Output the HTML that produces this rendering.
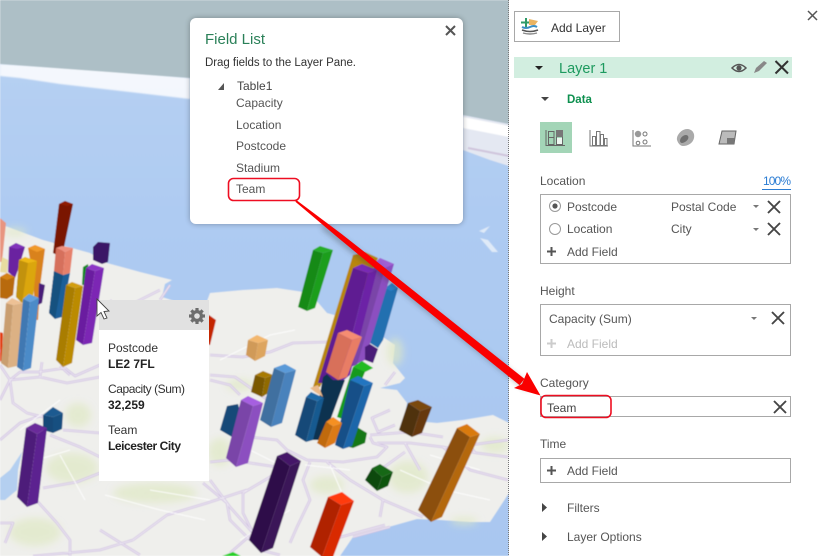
<!DOCTYPE html>
<html><head><meta charset="utf-8"><style>
html,body{margin:0;padding:0;background:#fff}
svg{display:block;font-family:"Liberation Sans",sans-serif}
text{font-size:12px;fill:#444}
.b{font-weight:bold;fill:#222}
</style></head><body>
<svg width="825" height="556" viewBox="0 0 825 556" xmlns="http://www.w3.org/2000/svg">
<defs>
<filter id="s" x="-20%" y="-20%" width="140%" height="140%"><feGaussianBlur stdDeviation="3"/></filter>
<filter id="bl"><feGaussianBlur stdDeviation="0.45"/></filter>
<filter id="bl2"><feGaussianBlur stdDeviation="3"/></filter>
<filter id="bl3" x="-20%" y="-20%" width="140%" height="140%"><feGaussianBlur stdDeviation="4"/></filter>
<filter id="tx"><feGaussianBlur stdDeviation="0.28"/></filter>
<linearGradient id="sea" x1="0" y1="0" x2="0" y2="1"><stop offset="0" stop-color="#b9d2f2"/><stop offset=".4" stop-color="#aecbf2"/><stop offset="1" stop-color="#a9c7f0"/></linearGradient>
<path id="r" d="M210,355 243,357 270,352 293,343 327,342 M210,380 230,385 240,395 M210,375 235,377 265,398 285,405 M250,437 277,440 287,450 307,460 343,462 377,457 387,447 373,443 370,437 M377,443 410,443 443,447 477,453 508,457 M370,435 410,432 443,437 M327,462 350,480 383,500 423,517 M380,517 383,500 M390,527 353,537 M310,462 303,480 310,500 297,527 290,543 M210,462 230,460 277,467 M210,480 230,507 253,533 M243,493 270,477 277,470 M243,493 243,513 253,533 230,553 M10,380 13,403 27,413 43,417 M10,380 40,377 67,383 100,377 M0,440 20,423 43,415 M50,435 80,447 100,457 M63,430 100,433 M43,488 77,482 100,473 M38,502 57,523 70,540 70,556 M0,523 13,523 5,543 M133,540 167,515 207,503 247,490 M203,483 227,503 230,520 250,540 M33,556 100,550 133,540 M0,400 10,380 M0,365 10,380 20,372 38,372 65,368 M40,377 42,362 M65,368 75,376 100,365 M0,350 8,362 M60,366 70,375 M280,555 260,550 M385,385 395,372 M390,410 372,418 378,432 395,425 M405,452 380,470 M443,447 470,470 508,480 M475,453 470,445 508,440 M140,555 100,530 M405,443 420,470 M330,540 385,525 M160,300 170,285 M130,305 160,290 M110,300 125,320"/>
<path id="w" d="M20,465 70,450 M60,455 85,500 M105,495 160,510 205,520 M150,490 210,500 M220,360 270,335 295,330 M330,465 345,500 M400,470 445,490 490,500 M430,455 480,470 M250,450 280,465 M305,465 350,470 M20,430 60,400 M240,540 290,510"/>
</defs>
<g filter="url(#bl)">
<rect width="509" height="556" fill="url(#sea)"/>
<!-- sky -->
<polygon points="0,64 100,70 190,78 190,99 130,92 60,84 20,78 0,76" fill="#fff" opacity=".85" filter="url(#bl)"/>
<polygon points="463,115 509,124 509,166 490,160 463,150" fill="#e4e8f2"/>
<polygon points="463,117 509,126 509,137 463,128" fill="#fff"/>
<path d="M468,148 509,156" stroke="#cfc4dc" stroke-width="2" fill="none"/>
<polygon points="0,0 509,0 509,124 463,115 300,95 190,78 0,64" fill="#adbfc6"/>
<polygon points="479,231 490,226 484,233" fill="#dfeaf8"/>
<polygon points="480,238 488,240 498,252 492,252" fill="#dfeaf8"/>
<!-- land -->
<polygon points="0,224 43,240 90,253 107,263 140,272 172,280 165,284 162,297 190,306 203,312 210,293 243,290 277,288 310,293 327,313 360,322 380,335 395,345 393,363 405,378 400,383 380,388 397,390 407,403 404,420 437,423 463,420 493,415 509,423 509,493 490,522 470,522 440,520 417,519 385,528 353,537 340,556 0,556" fill="#efefec"/>
<!-- green tints -->
<g fill="#dfe8c4" opacity=".7" filter="url(#bl3)">
<ellipse cx="78" cy="415" rx="13" ry="12"/><ellipse cx="72" cy="468" rx="26" ry="15"/><ellipse cx="155" cy="493" rx="42" ry="10"/>
<ellipse cx="35" cy="532" rx="26" ry="14"/><ellipse cx="220" cy="452" rx="12" ry="14"/><ellipse cx="408" cy="477" rx="20" ry="16"/>
<ellipse cx="327" cy="485" rx="17" ry="9"/><ellipse cx="495" cy="445" rx="14" ry="8"/><ellipse cx="464" cy="521" rx="14" ry="4"/>
<ellipse cx="395" cy="352" rx="8" ry="14"/><ellipse cx="240" cy="385" rx="14" ry="6"/><ellipse cx="15" cy="232" rx="12" ry="4"/>
</g>
<polygon points="22,452 18,470 17,490 5,500 0,500 0,478 10,470" fill="#b4cff0"/>
<!-- roads -->
<use href="#r" fill="none" stroke="#d2c3e2" stroke-width="2.6" stroke-linejoin="round"/>
<use href="#r" fill="none" stroke="#f1eef4" stroke-width=".8" stroke-linejoin="round"/>
<use href="#w" fill="none" stroke="#fff" stroke-width="1" opacity=".85"/>

<!-- far-left cluster -->
<polygon points="0,218 6,223 2,262 0,262" fill="#e89580"/>
<polygon points="59,204 65,201 73,204 63,252 57,255 53,253" fill="#7a1400"/>
<polygon points="59,204 65,201 73,204 67,206" fill="#8f1c04"/>
<polygon points="93,247 98,242 110,243 108,262 102,264 93,260" fill="#3a1566"/>
<polygon points="83,267 88,264 90,285 82,285" fill="#118a1c"/>
<polygon points="9,247 16,243 25,247 18,270 15,278 8,272" fill="#6b24a0"/>
<polygon points="9,247 16,243 25,247 17,249" fill="#8130bb"/>
<polygon points="2,257 8,260 7,273 0,272" fill="#e8dca0"/>
<polygon points="28,248 35,245 45,249 40,287 38,320 36,320 32,270" fill="#d9821b"/>
<polygon points="28,248 35,245 45,249 37,252" fill="#f09a2c"/>
<polygon points="39,283 45,285 42,303 38,305" fill="#4a1a78"/>
<polygon points="19,260 25,257 37,261 33,297 22,303 16,297" fill="#dba60f"/>
<polygon points="19,260 28,263 22,303 16,297" fill="#c29207"/>
<polygon points="19,260 25,257 37,261 28,263" fill="#eeb818"/>
<polygon points="0,277 7,273 15,277 13,295 7,299 0,298" fill="#b86a08"/>
<polygon points="0,277 7,273 15,277 7,280" fill="#d48312"/>
<polygon points="54,271 63,275 70,273 62,317 55,319 49,313" fill="#1a5f99"/>
<polygon points="54,271 63,275 55,319 49,313" fill="#14517f"/>
<polygon points="56,248 65,252 63,275 54,271" fill="#d66f5b"/>
<polygon points="65,252 73,248 70,273 63,275" fill="#e6806a"/>
<polygon points="56,248 62,246 73,248 65,252" fill="#ee9180"/>
<polygon points="86,268 95,271 83,345 76,340" fill="#6a1fa0"/>
<polygon points="95,271 104,268 92,343 83,345" fill="#7b28b4"/>
<polygon points="86,268 92,264 104,268 95,271" fill="#8d36c6"/>
<polygon points="66,285 75,288 63,367 56,360" fill="#a97d00"/>
<polygon points="75,288 83,286 72,363 63,367" fill="#bb8b03"/>
<polygon points="66,285 72,282 83,286 75,288" fill="#d29e08"/>
<polygon points="0,332 3,333 2,360 0,362" fill="#e23b0c"/>
<polygon points="6,303 13,305 8,368 1,363" fill="#c99e70"/>
<polygon points="13,305 23,303 17,366 8,368" fill="#dcb184"/>
<polygon points="6,303 12,298 23,303 13,305" fill="#edc195"/>
<polygon points="23,299 30,302 23,371 17,367" fill="#3f78b2"/>
<polygon points="30,302 39,298 31,368 23,371" fill="#4b8bc8"/>
<polygon points="23,299 29,294 39,298 30,302" fill="#62a0de"/>
<!-- small dark blue -->
<polygon points="43,415 53,417 53,433 43,430" fill="#134a78"/>
<polygon points="53,417 63,413 62,429 53,433" fill="#164f80"/>
<polygon points="43,415 53,407 63,413 53,417" fill="#1a5a90"/>
<!-- left purple -->
<polygon points="26,428 37,434 27,507 17,497" fill="#4e1a7a"/>
<polygon points="37,434 47,428 38,503 27,507" fill="#5c2090"/>
<polygon points="26,428 35,423 47,428 37,434" fill="#6a2a9a"/>
<!-- red behind tooltip -->
<polygon points="205,315 209,315 216,320 210,345 205,345" fill="#c42600"/>
<!-- mid small -->
<polygon points="248,340 258,343 255,361 246,355" fill="#d09a58"/>
<polygon points="258,343 268,340 265,356 255,361" fill="#dda55f"/>
<polygon points="248,340 257,335 268,340 258,343" fill="#f2b76e"/>
<polygon points="255,375 265,378 262,397 251,392" fill="#7a5800"/>
<polygon points="265,378 273,375 270,392 262,397" fill="#906a00"/>
<polygon points="255,375 263,371 273,375 265,378" fill="#a87a00"/>
<polygon points="274,368 285,373 271,427 260,420" fill="#3f70a0"/>
<polygon points="285,373 296,370 282,423 271,427" fill="#4a82bc"/>
<polygon points="274,368 285,364 296,370 285,373" fill="#5a9ad8"/>
<polygon points="227,406 238,404 240,412 235,437 232,437 220,430" fill="#134a78"/>
<polygon points="241,400 253,406 236,467 226,458" fill="#7a45a8"/>
<polygon points="253,406 263,403 248,463 236,467" fill="#8c50c0"/>
<polygon points="241,400 248,396 263,403 253,406" fill="#a65fe0"/>
<!-- green tall -->
<polygon points="313,250 323,253 307,311 298,307" fill="#168a18"/>
<polygon points="323,253 333,250 315,308 307,311" fill="#1e9e1e"/>
<polygon points="313,250 320,246 333,250 323,253" fill="#26ad26"/>
<!-- big cluster -->
<polygon points="353,255 365,252 378,258 320,387 313,387" fill="#b8860b"/>
<polygon points="392,283 398,288 383,340 378,348 370,343 385,288" fill="#2070b0"/>
<polygon points="385,288 392,283 398,288 391,291" fill="#2a7fc4"/>
<polygon points="375,263 380,258 394,264 365,360 350,367" fill="#8c50c0"/>
<polygon points="375,263 385,268 357,365 350,367" fill="#7a45a8"/>
<polygon points="375,263 380,258 394,264 385,268" fill="#a060d4"/>
<polygon points="353,268 368,273 340,383 318,383" fill="#5e1e92"/>
<polygon points="368,273 377,270 350,375 340,383" fill="#6c22a6"/>
<polygon points="353,268 362,264 377,270 368,273" fill="#7a2cb8"/>
<polygon points="365,347 370,344 378,349 373,363 365,360" fill="#4a1a78"/>
<polygon points="353,367 362,361 373,368 365,372 345,420 337,417" fill="#179a1e"/>
<polygon points="353,367 362,361 373,368 365,372" fill="#24bb24"/>
<polygon points="338,333 352,340 338,380 326,372" fill="#d8705a"/>
<polygon points="352,340 362,337 347,377 338,380" fill="#e87d65"/>
<polygon points="338,333 347,330 362,337 352,340" fill="#f58d72"/>
<polygon points="357,427 367,433 365,443 353,448 345,446" fill="#147814"/>
<polygon points="323,377 327,374 333,380 345,380 323,440 312,440" fill="#0f3050"/>
<polygon points="350,380 364,386 343,449 335,445" fill="#154f88"/>
<polygon points="364,386 373,383 352,446 343,449" fill="#1c66aa"/>
<polygon points="350,380 358,376 373,383 364,386" fill="#2074c0"/>
<polygon points="310,388 318,385 323,397 315,392" fill="#eab98a"/>
<polygon points="306,397 317,401 306,442 295,435" fill="#134a78"/>
<polygon points="317,401 324,398 313,440 306,442" fill="#175a90"/>
<polygon points="306,397 311,392 324,398 317,401" fill="#1f6aa8"/>
<polygon points="326,422 333,426 325,448 317,443" fill="#c06a10"/>
<polygon points="333,426 342,423 335,443 325,448" fill="#dc7a12"/>
<polygon points="326,422 333,417 342,423 333,426" fill="#f59020"/>
<!-- brown right -->
<polygon points="408,403 420,411 412,437 399,430" fill="#50300a"/>
<polygon points="420,411 432,407 422,433 412,437" fill="#66380a"/>
<polygon points="408,403 418,400 432,407 420,411" fill="#7a4a10"/>
<!-- orange-brown big -->
<polygon points="457,428 470,437 431,522 418,510" fill="#8c4f08"/>
<polygon points="470,437 480,434 442,517 431,522" fill="#b4680c"/>
<polygon points="457,428 467,424 480,434 470,437" fill="#d97a10"/>
<!-- dark green -->
<polygon points="372,468 382,477 377,491 365,480" fill="#0c480c"/>
<polygon points="382,477 393,472 388,486 377,491" fill="#105410"/>
<polygon points="372,468 380,464 393,472 382,477" fill="#156815"/>
<!-- dark purple big -->
<polygon points="277,456 290,466 261,553 249,540" fill="#2f0f4a"/>
<polygon points="290,466 301,461 273,548 261,553" fill="#3a1259"/>
<polygon points="277,456 287,452 301,461 290,466" fill="#451668"/>
<!-- red -->
<polygon points="328,497 341,505 322,557 310,547" fill="#b02000"/>
<polygon points="341,505 354,501 333,557 322,557" fill="#d92a00"/>
<polygon points="328,497 342,492 354,501 341,505" fill="#ff3b0f"/>
<!-- green bottom -->
<polygon points="222,556 233,552 241,556" fill="#28d028"/>
</g>

<!-- dotted edge -->
<line x1="508.5" y1="0" x2="508.5" y2="556" stroke="#777" stroke-dasharray="1 1"/>

<rect x="190" y="18" width="273" height="206" rx="6" fill="#000" opacity=".3" filter="url(#s)"/>
<g filter="url(#tx)">
<!-- field list -->
<rect x="190" y="18" width="273" height="206" rx="6" fill="#fff"/>
<text x="205" y="44" style="font-size:15px;fill:#2a8058">Field List</text>
<path d="M446,26 455,35 M455,26 446,35" stroke="#555" stroke-width="2" fill="none"/>
<text x="205" y="66" textLength="151" style="font-size:11.5px;fill:#333">Drag fields to the Layer Pane.</text>
<polygon points="224,83 224,90 218,90" fill="#555"/>
<text x="237" y="90" style="fill:#444;font-size:12px">Table1</text>
<text x="236" y="107" style="fill:#555">Capacity</text>
<text x="236" y="129" style="fill:#555">Location</text>
<text x="236" y="150" style="fill:#555">Postcode</text>
<text x="236" y="172" style="fill:#555">Stadium</text>
<text x="236" y="193" style="fill:#555">Team</text>

<!-- tooltip -->
<rect x="99" y="300" width="110" height="181" fill="#fff"/>
<rect x="99" y="300" width="110" height="30" fill="#e1e1e1"/>
<g transform="translate(197,316)" fill="#6d6d6d">
<rect x="-1.6" y="-8" width="3.2" height="16"/><rect x="-1.6" y="-8" width="3.2" height="16" transform="rotate(45)"/><rect x="-1.6" y="-8" width="3.2" height="16" transform="rotate(90)"/><rect x="-1.6" y="-8" width="3.2" height="16" transform="rotate(135)"/>
<circle r="6"/><circle r="2.8" fill="#e1e1e1"/>
</g>
<text x="108" y="352" style="fill:#333">Postcode</text>
<text x="108" y="368" class="b">LE2 7FL</text>
<text x="108" y="393" style="fill:#333" textLength="77">Capacity (Sum)</text>
<text x="108" y="409" class="b">32,259</text>
<text x="108" y="434" style="fill:#333">Team</text>
<text x="108" y="450" class="b" textLength="73">Leicester City</text>
<!-- cursor -->
<polygon points="97,299 97,316 101,312.5 104,319 107,318 104,311.5 109,311" fill="#fff" stroke="#444" stroke-width=".9"/>

<!-- right panel -->
<rect x="509" y="0" width="316" height="556" fill="#fff"/>
<path d="M808,11 817,20 M817,11 808,20" stroke="#555" stroke-width="1.5" fill="none"/>
<rect x="514.5" y="11.5" width="105" height="30" fill="#fff" stroke="#a8a8a8"/>
<g>
<path d="M526,18v9M521,22.5h10" stroke="#2f9a68" stroke-width="2" fill="none"/>
<polygon points="529,19 538,21 535,25 529,25" fill="#eab463"/>
<path d="M522,27q4,2 8,0t7,0" stroke="#3b8ec4" stroke-width="2" fill="none"/>
<path d="M522,30q8,3 16,0" stroke="#555" stroke-width="1.6" fill="none"/>
<path d="M523,33q7,2 14,0" stroke="#888" stroke-width="1.4" fill="none"/>
</g>
<text x="551" y="32" style="fill:#333;font-size:12px">Add Layer</text>

<rect x="514" y="57" width="278" height="21" fill="#d2eee0"/>
<polygon points="535,66 543,66 539,70" fill="#222"/>
<text x="559" y="73" style="font-size:14.5px;fill:#1f9a5e">Layer 1</text>
<path d="M732,68q7,-7 14,0q-7,7 -14,0z" fill="none" stroke="#555" stroke-width="1.5"/><circle cx="739" cy="68" r="2.6" fill="#555"/>
<path d="M754,73 756,68 764,61 767,63 759,71z" fill="#888"/>
<path d="M775.5,61 788,73.5 M788,61 775.5,73.5" stroke="#333" stroke-width="2" fill="none"/>

<polygon points="541,97 549,97 545,101" fill="#444"/>
<text x="567" y="103" style="font-size:11.5px;font-weight:bold;fill:#109050">Data</text>

<!-- layer type icons -->
<rect x="540" y="122" width="32" height="31" fill="#a3d5b7"/>
<g fill="none" stroke="#666" stroke-width="1">
<path d="M546,130v15.5h19"/>
<rect x="548.5" y="131.5" width="5.5" height="13"/>
<rect x="556.5" y="130.5" width="6" height="14"/>
<path d="M548.5,137.5h5.5"/>
</g>
<rect x="556" y="130" width="7" height="7" fill="#777"/>
<rect x="557" y="138" width="5" height="6" fill="#eef6f0"/>
<g fill="none" stroke="#777" stroke-width="1">
<path d="M590,130v16h18"/>
<rect x="592.5" y="136.5" width="3" height="9"/><rect x="596.5" y="131.5" width="3.5" height="14"/><rect x="600.5" y="134.5" width="3" height="11"/><rect x="604.5" y="138.5" width="2.5" height="7"/>
</g>
<g fill="none" stroke="#777" stroke-width="1">
<path d="M633,130v16h18"/><circle cx="645" cy="134" r="2"/><circle cx="645" cy="142" r="2"/><circle cx="638" cy="143" r="1.8"/>
</g>
<circle cx="638" cy="134" r="3.2" fill="#999"/>
<path d="M677,140c-1,-5 5,-11 10,-11 5,0 8,4 7,9 -1,5 -6,8 -11,8 -3,0 -5,-3 -6,-6z" fill="#aaa"/>
<path d="M680,141c0,-3 3,-6 6,-6 2,0 3,2 2,4 -1,2 -4,4 -6,4 -1,0 -2,-1 -2,-2z" fill="#6f6f6f"/>
<polygon points="722,131 736,131 734,144 719,144" fill="#bbb" stroke="#666" stroke-width="1"/>
<polygon points="727,138 735,138 734,144 727,144" fill="#777"/>

<text x="540" y="185" style="fill:#555">Location</text>
<text x="763" y="185" textLength="28" style="fill:#2b7cd3">100%</text>
<line x1="762" y1="189.5" x2="791" y2="189.5" stroke="#2b7cd3"/>
<rect x="540.5" y="194.5" width="250" height="69" fill="#fff" stroke="#a8a8a8"/>
<circle cx="555" cy="206" r="5.5" fill="#fff" stroke="#999"/><circle cx="555" cy="206" r="2.6" fill="#555"/>
<text x="567" y="211" style="fill:#555">Postcode</text>
<text x="671" y="211" style="fill:#555">Postal Code</text>
<polygon points="753,205 759,205 756,208" fill="#777"/>
<path d="M768,201 780,213 M780,201 768,213" stroke="#444" stroke-width="1.9" fill="none"/>
<circle cx="555" cy="229" r="5.5" fill="#fff" stroke="#999"/>
<text x="567" y="233" style="fill:#555">Location</text>
<text x="671" y="233" style="fill:#555">City</text>
<polygon points="753,228 759,228 756,231" fill="#777"/>
<path d="M768,223 780,235 M780,223 768,235" stroke="#444" stroke-width="1.9" fill="none"/>
<path d="M551.5,247v9M547,251.5h9" stroke="#555" stroke-width="2" fill="none"/>
<text x="567" y="256" style="fill:#555">Add Field</text>

<text x="540" y="295" style="fill:#555">Height</text>
<rect x="540.5" y="304.5" width="250" height="51" fill="#fff" stroke="#a8a8a8"/>
<text x="549" y="323" style="fill:#555">Capacity (Sum)</text>
<polygon points="751,317 757,317 754,320" fill="#777"/>
<path d="M772,312 784,324 M784,312 772,324" stroke="#444" stroke-width="1.9" fill="none"/>
<path d="M551.5,339v9M547,343.5h9" stroke="#ccc" stroke-width="2" fill="none"/>
<text x="567" y="348" style="fill:#bbb">Add Field</text>

<text x="540" y="387" style="fill:#555">Category</text>
<rect x="540.5" y="396.5" width="250" height="20" fill="#fff" stroke="#a8a8a8"/>
<text x="547" y="412" style="fill:#444">Team</text>
<path d="M774,401 786,413 M786,401 774,413" stroke="#444" stroke-width="1.9" fill="none"/>

<text x="540" y="448" style="fill:#555">Time</text>
<rect x="540.5" y="458.5" width="250" height="24" fill="#fff" stroke="#a8a8a8"/>
<path d="M551.5,466v9M547,470.5h9" stroke="#555" stroke-width="2" fill="none"/>
<text x="567" y="475" style="fill:#555">Add Field</text>

<polygon points="542,503 547,507.5 542,512" fill="#444"/>
<text x="567" y="512" style="fill:#555">Filters</text>
<polygon points="542,532 547,536.5 542,541" fill="#444"/>
<text x="567" y="541" style="fill:#555">Layer Options</text>
</g>

<!-- red annotations -->
<g opacity=".35" filter="url(#bl2)" transform="translate(3,4)">
<path d="M320,222 525,384" stroke="#333" stroke-width="6" fill="none"/>
</g>
<g filter="url(#tx)">
<polygon points="296.6,200.2 341.6,234 402.2,281.6 524.5,378.9 519.5,385.1 397.8,287 338.4,238 295.4,201.8" fill="#fa0000"/>
<polygon points="540.5,395.5 527,372 522,384 514,388" fill="#fa0000"/>
<rect x="228.5" y="178.5" width="71" height="22" rx="5" fill="none" stroke="#ee1122" stroke-width="1.6"/>
<rect x="541" y="395.5" width="70" height="22" rx="5" fill="none" stroke="#ee1122" stroke-width="1.6"/>
</g>
</svg>
</body></html>
